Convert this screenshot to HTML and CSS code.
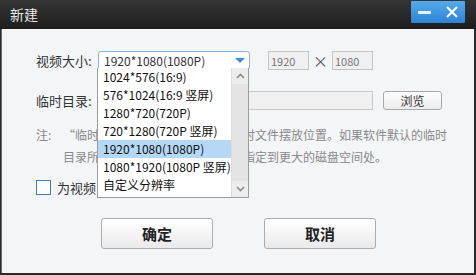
FILE: index.html
```html
<!DOCTYPE html>
<html lang="zh-CN">
<head>
    <meta charset="UTF-8">
    <title>新建</title>
    <link rel="stylesheet" href="styles.css">
</head>
<body>
    <div class="window">
        <div class="titlebar">
            <span class="title">新建</span>
            <div class="controls">
                <span class="minimize"></span>
                <svg class="close" width="12" height="12" viewBox="0 0 12 12">
                    <path d="M1 1 L11 11 M11 1 L1 11" stroke="#fff" stroke-width="2"/>
                </svg>
            </div>
        </div>
        <div class="content">
            <div class="row">
                <label class="label">视频大小:</label>
                <div class="select">
                    <span>1920*1080(1080P)</span>
                    <span class="arrow"></span>
                </div>
                <input class="size" type="text" value="1920" disabled>
                <span class="times">×</span>
                <input class="size" type="text" value="1080" disabled>
            </div>
            <div class="row row-dir">
                <label class="label">临时目录:</label>
                <input class="dir" type="text" disabled>
                <button class="browse">浏览</button>
            </div>
            <div class="note">
                <span class="note-label">注:</span>
                <p>“临时目录”是视频制作过程中临时文件摆放位置。如果软件默认的临时<br>目录所在磁盘的空间不足，请将其指定到更大的磁盘空间处。</p>
            </div>
            <label class="check">
                <span class="box"></span>
                <span>为视频自动添加字幕</span>
            </label>
            <div class="actions">
                <button class="btn">确定</button>
                <button class="btn">取消</button>
            </div>

            <!-- open dropdown list of the size select -->
            <div class="dropdown">
                <ul>
                    <li>1024*576(16:9)</li>
                    <li>576*1024(16:9 竖屏)</li>
                    <li>1280*720(720P)</li>
                    <li>720*1280(720P 竖屏)</li>
                    <li class="active">1920*1080(1080P)</li>
                    <li>1080*1920(1080P 竖屏)</li>
                    <li>自定义分辨率</li>
                </ul>
                <div class="scrollbar">
                    <span class="sb-btn">
                        <svg width="9" height="6" viewBox="0 0 9 6"><path d="M1 5 L4.5 1.5 L8 5" fill="none" stroke="#8c8c8c" stroke-width="1.6"/></svg>
                    </span>
                    <span class="sb-track"></span>
                    <span class="sb-btn">
                        <svg width="9" height="6" viewBox="0 0 9 6"><path d="M1 1 L4.5 4.5 L8 1" fill="none" stroke="#8c8c8c" stroke-width="1.6"/></svg>
                    </span>
                </div>
            </div>
        </div>
    </div>
</body>
</html>
```

FILE: styles.css
```css
body {
    margin: 0;
    font-family: "Noto Sans CJK SC", "Liberation Sans", sans-serif;
    font-size: 12px;
    background: #ffffff;
}
.window {
    width: 476px;
    height: 275px;
    display: flex;
    flex-direction: column;
    background: #2a2a2a;
}
.titlebar {
    height: 29px;
    display: flex;
    justify-content: space-between;
    align-items: flex-start;
    background: linear-gradient(#353535, #1d1d1d);
    flex-shrink: 0;
}
.title {
    color: #e6e6e6;
    font-size: 14px;
    line-height: 29px;
    padding-left: 10px;
}
.controls {
    margin: 1px 11px 0 0;
    width: 54px;
    height: 22px;
    display: flex;
    align-items: center;
    justify-content: space-around;
    background: linear-gradient(#56a9ec, #2d84d6);
    border-radius: 1px;
}
.minimize {
    width: 13px;
    height: 3px;
    background: #e8f2fb;
    border-radius: 1px;
}
.close {
    display: block;
}
.content {
    position: relative;
    flex: 1;
    margin: 0 2px 2px 1px;
    padding: 22px 0 0 34px;
    background: #f4f5f7;
    border-left: 1px solid #6a6a6a;
    color: #333;
}
.row {
    display: flex;
    align-items: center;
    height: 19px;
}
.label {
    width: 62px;
    font-size: 13px;
    color: #333;
}
.select {
    width: 152px;
    height: 19px;
    box-sizing: border-box;
    border: 1px solid #86b5e6;
    border-radius: 3px;
    background: #fff;
    display: flex;
    align-items: center;
    justify-content: space-between;
    padding-left: 5px;
}
.arrow {
    width: 0;
    height: 0;
    margin-right: 4px;
    border-left: 5px solid transparent;
    border-right: 5px solid transparent;
    border-top: 5px solid #3f8edb;
}
.size {
    width: 41px;
    height: 19px;
    box-sizing: border-box;
    border: 1px solid #c4c4c4;
    background: #f0f0f0;
    font-family: inherit;
    font-size: 11px;
    color: #777;
    padding: 0 2px;
}
.select + .size {
    margin-left: 18px;
}
.times {
    width: 23px;
    text-align: center;
    font-size: 15px;
    color: #555;
}
.row-dir {
    margin-top: 21px;
}
.dir {
    width: 275px;
    height: 19px;
    box-sizing: border-box;
    border: 1px solid #c8c8c8;
    background: #f0f0f0;
}
.browse {
    margin-left: 10px;
    width: 59px;
    height: 19px;
    padding: 0;
    font-family: inherit;
    font-size: 12px;
    color: #333;
    border: 1px solid #a9a9a9;
    border-radius: 3px;
    background: linear-gradient(#ffffff, #ececec);
}
.note {
    display: flex;
    margin-top: 14px;
    color: #8a8a8a;
    font-size: 12px;
    line-height: 22px;
}
.note-label {
    width: 27px;
    flex-shrink: 0;
}
.note p {
    margin: 0;
    white-space: nowrap;
}
.check {
    display: flex;
    align-items: center;
    margin-top: 11px;
    height: 16px;
    font-size: 13px;
    color: #333;
}
.box {
    width: 13px;
    height: 13px;
    border: 1px solid #3e7fb3;
    background: #fff;
    margin-right: 6px;
}
.actions {
    display: flex;
    gap: 51px;
    margin: 23px 0 0 65px;
}
.btn {
    width: 112px;
    height: 31px;
    padding: 0;
    font-family: inherit;
    font-size: 15px;
    font-weight: bold;
    color: #222;
    border: 1px solid #adadad;
    border-radius: 3px;
    background: linear-gradient(#ffffff, #eaeaea);
}
.dropdown {
    position: absolute;
    left: 95px;
    top: 39px;
    width: 152px;
    height: 130px;
    box-sizing: border-box;
    border: 1px solid #9c9c9c;
    border-top: none;
    background: #fff;
    display: flex;
}
.dropdown ul {
    flex: 1;
    margin: 0;
    padding: 0;
    list-style: none;
}
.dropdown li {
    height: 18px;
    line-height: 18px;
    padding-left: 5px;
    font-size: 12px;
    color: #111;
    white-space: nowrap;
}
.dropdown li.active {
    background: #b4d8f6;
}
.scrollbar {
    width: 16px;
    display: flex;
    flex-direction: column;
    background: #e9e9e9;
    border-left: 1px solid #dcdcdc;
}
.sb-btn {
    height: 16px;
    display: flex;
    align-items: center;
    justify-content: center;
    background: #ececec;
}
.sb-track {
    flex: 1;
    background: #e4e4e4;
}
```
